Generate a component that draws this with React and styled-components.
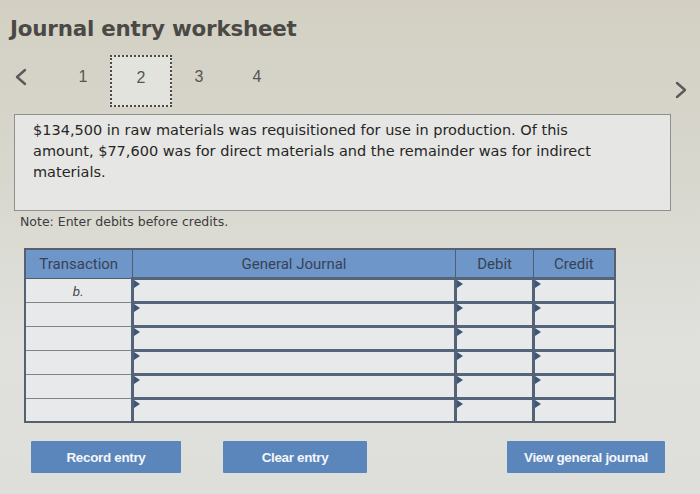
import React from 'react';
import styled, { createGlobalStyle } from 'styled-components';

const GlobalStyle = createGlobalStyle`
    html, body {
        margin: 0;
        padding: 0;
    }
    body {
        width: 700px;
        height: 494px;
        overflow: hidden;
        background: linear-gradient(180deg, #d3d0c3 0%, #d8d7ce 35%, #e0e1dd 70%, #dedfdb 100%);
        font-family: "DejaVu Sans", Verdana, sans-serif;
        color: #333;
    }
`;

const Page = styled.div`
    display: flex;
    flex-direction: column;
    padding: 14px 0 0 0;
`;

const Title = styled.h1`
    margin: 0 0 0 10px;
    font-family: "DejaVu Sans", Verdana, sans-serif;
    font-size: 21.4px;
    font-weight: bold;
    color: #4b4946;
    letter-spacing: -0.2px;
    height: 41px;
    line-height: 30px;
`;

const TabRow = styled.div`
    display: flex;
    align-items: center;
    height: 52px;
    padding-left: 14px;
    padding-right: 12px;
`;

const Chevron = styled.span`
    display: flex;
    width: 40px;
    align-self: ${p => (p.$right ? 'flex-end' : 'center')};
    margin-bottom: 8px;
    justify-content: ${p => (p.$right ? 'flex-end' : 'flex-start')};
    margin-left: ${p => (p.$right ? 'auto' : '0')};
`;

const Tab = styled.div`
    width: 58px;
    height: 48px;
    display: flex;
    align-items: center;
    justify-content: center;
    padding-bottom: 8px;
    font-family: "Liberation Sans", Arial, sans-serif;
    font-size: 16px;
    color: #555;
    box-sizing: border-box;
    ${p => p.$active && `
        border: 2px dotted #4a4a4a;
        background: #e3e3de;
        height: 52px;
        width: 62px;
        margin: 0 -2px;
        padding-bottom: 6px;
    `}
`;

const Box = styled.div`
    margin: 7px 29px 0 14px;
    height: 97px;
    box-sizing: border-box;
    background: #e6e7e4;
    border: 1px solid #8f908c;
    padding: 5px 40px 0 18px;
    font-size: 14.5px;
    line-height: 21px;
    color: #262626;
`;

const Note = styled.p`
    margin: 3px 0 0 20px;
    font-size: 12.5px;
    color: #3c3c3c;
    height: 34px;
    line-height: 16px;
`;

const Table = styled.table`
    margin-left: 24px;
    width: 592px;
    border-collapse: collapse;
    border: 2px solid #566170;
    font-family: Roboto, "Liberation Sans", Arial, sans-serif;
`;

const Th = styled.th`
    background: #6f96c8;
    height: 27px;
    padding: 0;
    font-size: 15px;
    font-weight: 400;
    color: #364357;
    text-align: center;
    border: 1px solid #4f5f72;
    width: ${p => p.$w}px;
`;

const Td = styled.td`
    position: relative;
    height: 21px;
    padding: 0;
    background: #e7e9ea;
    border-left: ${p => (p.$input ? '3px' : '1px')} solid #536375;
    border-right: 1px solid #536375;
    border-top: ${p => (p.$input ? '3px' : '1px')} solid ${p => (p.$input ? '#546579' : '#7d858f')};
    font-size: 13.5px;
    font-style: ${p => (p.$input ? 'normal' : 'italic')};
    color: #4a4a4a;
    text-align: center;
`;

const Marker = styled.span`
    position: absolute;
    left: 0;
    top: 0;
    width: 0;
    height: 0;
    border-top: 4px solid transparent;
    border-bottom: 4px solid transparent;
    border-left: 6px solid #3d5677;
`;

const ButtonRow = styled.div`
    display: flex;
    align-items: center;
    margin-top: 18px;
    padding-left: 31px;
`;

const Button = styled.button`
    width: ${p => p.$w}px;
    height: 32px;
    margin-left: ${p => p.$ml || 0}px;
    background: #5b86bc;
    border: none;
    border-radius: 1px;
    color: #f4f6fa;
    font-family: "Liberation Sans", Arial, sans-serif;
    font-size: 13.4px;
    font-weight: bold;
    letter-spacing: -0.3px;
    cursor: pointer;
`;

const ChevronIcon = ({ right }) => (
    <svg width="14" height="18" viewBox="0 0 14 18">
        <path
            d={right ? 'M3 2 L11 9 L3 16' : 'M11 2 L3 9 L11 16'}
            fill="none"
            stroke="#5a5a5a"
            strokeWidth="2.4"
            strokeLinecap="round"
            strokeLinejoin="round"
        />
    </svg>
);

const rows = ['b.', '', '', '', '', ''];

const App = () => {
    return (
        <>
            <GlobalStyle />
            <Page>
                <Title>Journal entry worksheet</Title>

                <TabRow>
                    <Chevron><ChevronIcon /></Chevron>
                    <Tab>1</Tab>
                    <Tab $active>2</Tab>
                    <Tab>3</Tab>
                    <Tab>4</Tab>
                    <Chevron $right><ChevronIcon right /></Chevron>
                </TabRow>

                <Box>
                    $134,500 in raw materials was requisitioned for use in production. Of this
                    amount, $77,600 was for direct materials and the remainder was for indirect
                    materials.
                </Box>

                <Note>Note: Enter debits before credits.</Note>

                <Table>
                    <thead>
                        <tr>
                            <Th $w={106}>Transaction</Th>
                            <Th $w={328}>General Journal</Th>
                            <Th $w={77}>Debit</Th>
                            <Th $w={81}>Credit</Th>
                        </tr>
                    </thead>
                    <tbody>
                        {rows.map((label, i) => (
                            <tr key={i}>
                                <Td>{label}</Td>
                                <Td $input><Marker /></Td>
                                <Td $input><Marker /></Td>
                                <Td $input><Marker /></Td>
                            </tr>
                        ))}
                    </tbody>
                </Table>

                <ButtonRow>
                    <Button $w={150}>Record entry</Button>
                    <Button $w={144} $ml={42}>Clear entry</Button>
                    <Button $w={158} $ml={140}>View general journal</Button>
                </ButtonRow>
            </Page>
        </>
    );
};

export default App;
